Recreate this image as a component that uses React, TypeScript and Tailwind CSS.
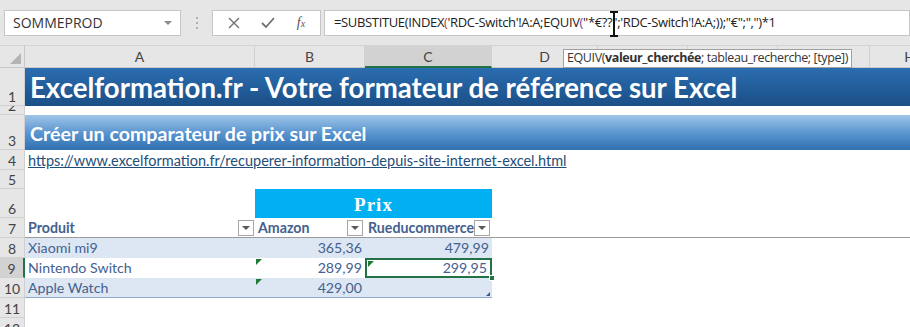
import React from 'react';

const cols = [
  { id: 'A', w: 230 },
  { id: 'B', w: 110 },
  { id: 'C', w: 127 },
  { id: 'D', w: 106 },
  { id: 'E', w: 90 },
  { id: 'F', w: 90 },
  { id: 'G', w: 92 },
  { id: 'H', w: 80 },
];

const FilterBtn = () => (
  <span className="flex h-[16px] w-[16px] shrink-0 items-center justify-center border border-[#a6a6a6] bg-white">
    <span className="h-0 w-0 border-x-[4px] border-t-[4px] border-x-transparent border-t-[#595959]" />
  </span>
);

const ErrTri = () => (
  <span className="absolute left-[1px] top-[1px] h-0 w-0 border-r-[6px] border-t-[6px] border-r-transparent border-t-[#1e7b34]" />
);

const RowHead = ({ n, h, active }: { n: number; h: number; active?: boolean }) => (
  <div
    className={`flex w-[25px] shrink-0 items-end justify-center overflow-hidden border-b border-r border-[#d0d0d0] pb-[1px] text-[14px] leading-none text-[#444] ${
      active ? 'border-r-2 border-r-[#217346] bg-[#d2d2d2]' : 'bg-[#e6e6e6]'
    }`}
    style={{ height: h }}
  >
    {n}
  </div>
);

export default function App() {
  const font = { fontFamily: 'Lato, "Open Sans", sans-serif' };
  return (
    <div className="h-[327px] w-[910px] overflow-hidden bg-white" style={font}>
      {/* formula bar */}
      <div className="flex h-[46px] items-center border-b border-[#d4d4d4] bg-[#e6e6e6] pl-[4px]">
        <div className="flex h-[26px] w-[177px] items-center justify-between border border-[#c6c6c6] bg-white pl-[8px] pr-[8px]">
          <span className="text-[14px] text-[#333]" style={{ fontFamily: '"Open Sans", sans-serif' }}>SOMMEPROD</span>
          <span className="h-0 w-0 border-x-[4px] border-t-[4px] border-x-transparent border-t-[#8a8a8a]" />
        </div>
        <div className="flex w-[31px] flex-col items-center gap-[3px]">
          <span className="h-[2px] w-[2px] bg-[#b0b0b0]" />
          <span className="h-[2px] w-[2px] bg-[#b0b0b0]" />
          <span className="h-[2px] w-[2px] bg-[#b0b0b0]" />
        </div>
        <div className="flex h-[26px] w-[109px] items-center justify-around border border-[#c6c6c6] bg-white px-[4px]">
          <svg width="12" height="12" viewBox="0 0 12 12"><path d="M1 1L11 11M11 1L1 11" stroke="#707070" strokeWidth="1.4" /></svg>
          <svg width="14" height="12" viewBox="0 0 14 12"><path d="M1 6L5 10L13 1" stroke="#707070" strokeWidth="1.8" fill="none" /></svg>
          <span className="text-[14px] italic text-[#555]" style={{ fontFamily: '"Liberation Serif", serif' }}>f<span className="text-[10px]">x</span></span>
        </div>
        <div className="ml-[3px] flex h-[26px] flex-1 items-center border border-[#c6c6c6] bg-white pl-[9px]">
          <span className="whitespace-nowrap text-[13px] text-[#222]" style={{ fontFamily: '"Open Sans", sans-serif', letterSpacing: '-0.35px' }}>
            =SUBSTITUE(INDEX<span className="text-[#c0392b]">(</span>'RDC-Switch'!A:A;EQUIV<span className="text-[#7b3fa0]">(</span>"*€??";'RDC-Switch'!A:A;));"€";",")*1
          </span>
          <svg className="absolute left-[609px] top-[11px]" width="10" height="26" viewBox="0 0 10 26"><path d="M1 1H9M5 1V25M1 25H9" stroke="#111" strokeWidth="2" fill="none" /></svg>
        </div>
      </div>

      {/* column headers */}
      <div className="relative flex h-[22px] bg-[#e6e6e6]">
        <div className="flex w-[25px] shrink-0 items-end justify-end border-r border-b border-[#c8c8c8] pb-[3px] pr-[3px]">
          <span className="h-0 w-0 border-b-[11px] border-l-[11px] border-b-[#b4b4b4] border-l-transparent" />
        </div>
        {cols.map((c) => (
          <div
            key={c.id}
            className={`flex shrink-0 items-center justify-center border-r border-[#d0d0d0] text-[14px] text-[#444] ${
              c.id === 'C' ? 'border-b-2 border-b-[#217346] bg-[#d2d2d2]' : 'border-b border-b-[#c8c8c8]'
            }`}
            style={{ width: c.w }}
          >
            {['E', 'F', 'G'].includes(c.id) ? '' : c.id}
          </div>
        ))}
        <div className="absolute left-[563px] top-[3px] flex h-[19px] items-center border border-[#a0a0a0] bg-white px-[3px] text-[12.5px] text-[#333]" style={{ fontFamily: '"Open Sans", sans-serif', letterSpacing: '-0.4px' }}>
          EQUIV(<b>valeur_cherchée</b>; tableau_recherche; [type])
        </div>
      </div>

      {/* row 1 */}
      <div className="flex h-[38px]">
        <RowHead n={1} h={38} />
        <div className="flex h-[38px] flex-1 items-end bg-gradient-to-b from-[#2b6db0] to-[#1b4f87] pb-[1px] pl-[5px] text-[27.6px] font-bold leading-[34px] text-white">
          Excelformation.fr - Votre formateur de référence sur Excel
        </div>
      </div>
      {/* row 2 */}
      <div className="flex h-[9px]">
        <RowHead n={2} h={9} />
        <div className="flex-1" />
      </div>
      {/* row 3 */}
      <div className="flex h-[35px]">
        <RowHead n={3} h={35} />
        <div className="flex h-[35px] flex-1 items-end bg-gradient-to-b from-[#9fc5e8] via-[#5b96d0] to-[#2e70b0] pb-[4px] pl-[5px] text-[19.6px] font-bold leading-[24px] text-white">
          Créer un comparateur de prix sur Excel
        </div>
      </div>
      {/* row 4 */}
      <div className="flex h-[20px]">
        <RowHead n={4} h={20} />
        <div className="flex h-[20px] flex-1 items-end pl-[3px] text-[14.5px] leading-[19px] text-[#1f4e79] underline">
          https://www.excelformation.fr/recuperer-information-depuis-site-internet-excel.html
        </div>
      </div>
      {/* row 5 */}
      <div className="flex h-[19px]">
        <RowHead n={5} h={19} />
        <div className="flex-1" />
      </div>
      {/* row 6 */}
      <div className="flex h-[29px]">
        <RowHead n={6} h={29} />
        <div className="w-[230px]" />
        <div className="flex h-[29px] w-[237px] items-center justify-center bg-[#00b0f0] pt-[2px] text-[19px] font-bold leading-none text-white" style={{ fontFamily: '"Liberation Serif", serif', letterSpacing: '1px' }}>
          Prix
        </div>
      </div>
      {/* row 7 */}
      <div className="flex h-[20px]">
        <RowHead n={7} h={20} />
        <div className="flex h-[20px] flex-1 border-b border-[#9a9a9a] text-[14.2px] font-bold leading-[18px] text-[#44618f]">
          <div className="flex w-[230px] items-center justify-between pl-[3px] pr-[1px]">Produit<FilterBtn /></div>
          <div className="flex w-[110px] items-center justify-between pl-[3px] pr-[2px]">Amazon<FilterBtn /></div>
          <div className="flex w-[127px] items-center justify-between pl-[3px] pr-[2px]">Rueducommerce<FilterBtn /></div>
        </div>
      </div>
      {/* rows 8-10 */}
      {[
        { n: 8, p: 'Xiaomi mi9', a: '365,36', r: '479,99', band: true },
        { n: 9, p: 'Nintendo Switch', a: '289,99', r: '299,95', band: false },
        { n: 10, p: 'Apple Watch', a: '429,00', r: '', band: true },
      ].map((row) => (
        <div key={row.n} className="flex h-[20px]">
          <RowHead n={row.n} h={20} active={row.n === 9} />
          <div
            className={`flex h-[20px] w-[467px] text-[14.2px] leading-[19px] text-[#44618f] ${row.band ? 'bg-[#dde7f3]' : 'bg-white'} ${
              row.n === 10 ? 'border-b border-[#8ea9cf]' : ''
            }`}
          >
            <div className="w-[230px] pl-[3px]">{row.p}</div>
            <div className="relative w-[110px] pr-[3px] text-right">
              {row.n !== 8 && <ErrTri />}
              {row.a}
            </div>
            <div
              className={`relative w-[127px] pr-[3px] text-right ${row.n === 9 ? 'border-2 border-[#217346] leading-[16px]' : ''}`}
            >
              {row.n === 9 && <ErrTri />}
              {row.r}
              {row.n === 9 && <span className="absolute -bottom-[5px] -right-[5px] h-[6px] w-[6px] border border-white bg-[#217346]" />}
              {row.n === 10 && <span className="absolute bottom-[1px] right-[2px] h-0 w-0 border-b-[4px] border-l-[4px] border-b-[#3b5b8f] border-l-transparent" />}
            </div>
          </div>
        </div>
      ))}
      {/* rows 11-12 */}
      <div className="flex h-[20px]">
        <RowHead n={11} h={20} />
      </div>
      <div className="flex h-[20px]">
        <RowHead n={12} h={20} />
      </div>
    </div>
  );
}
